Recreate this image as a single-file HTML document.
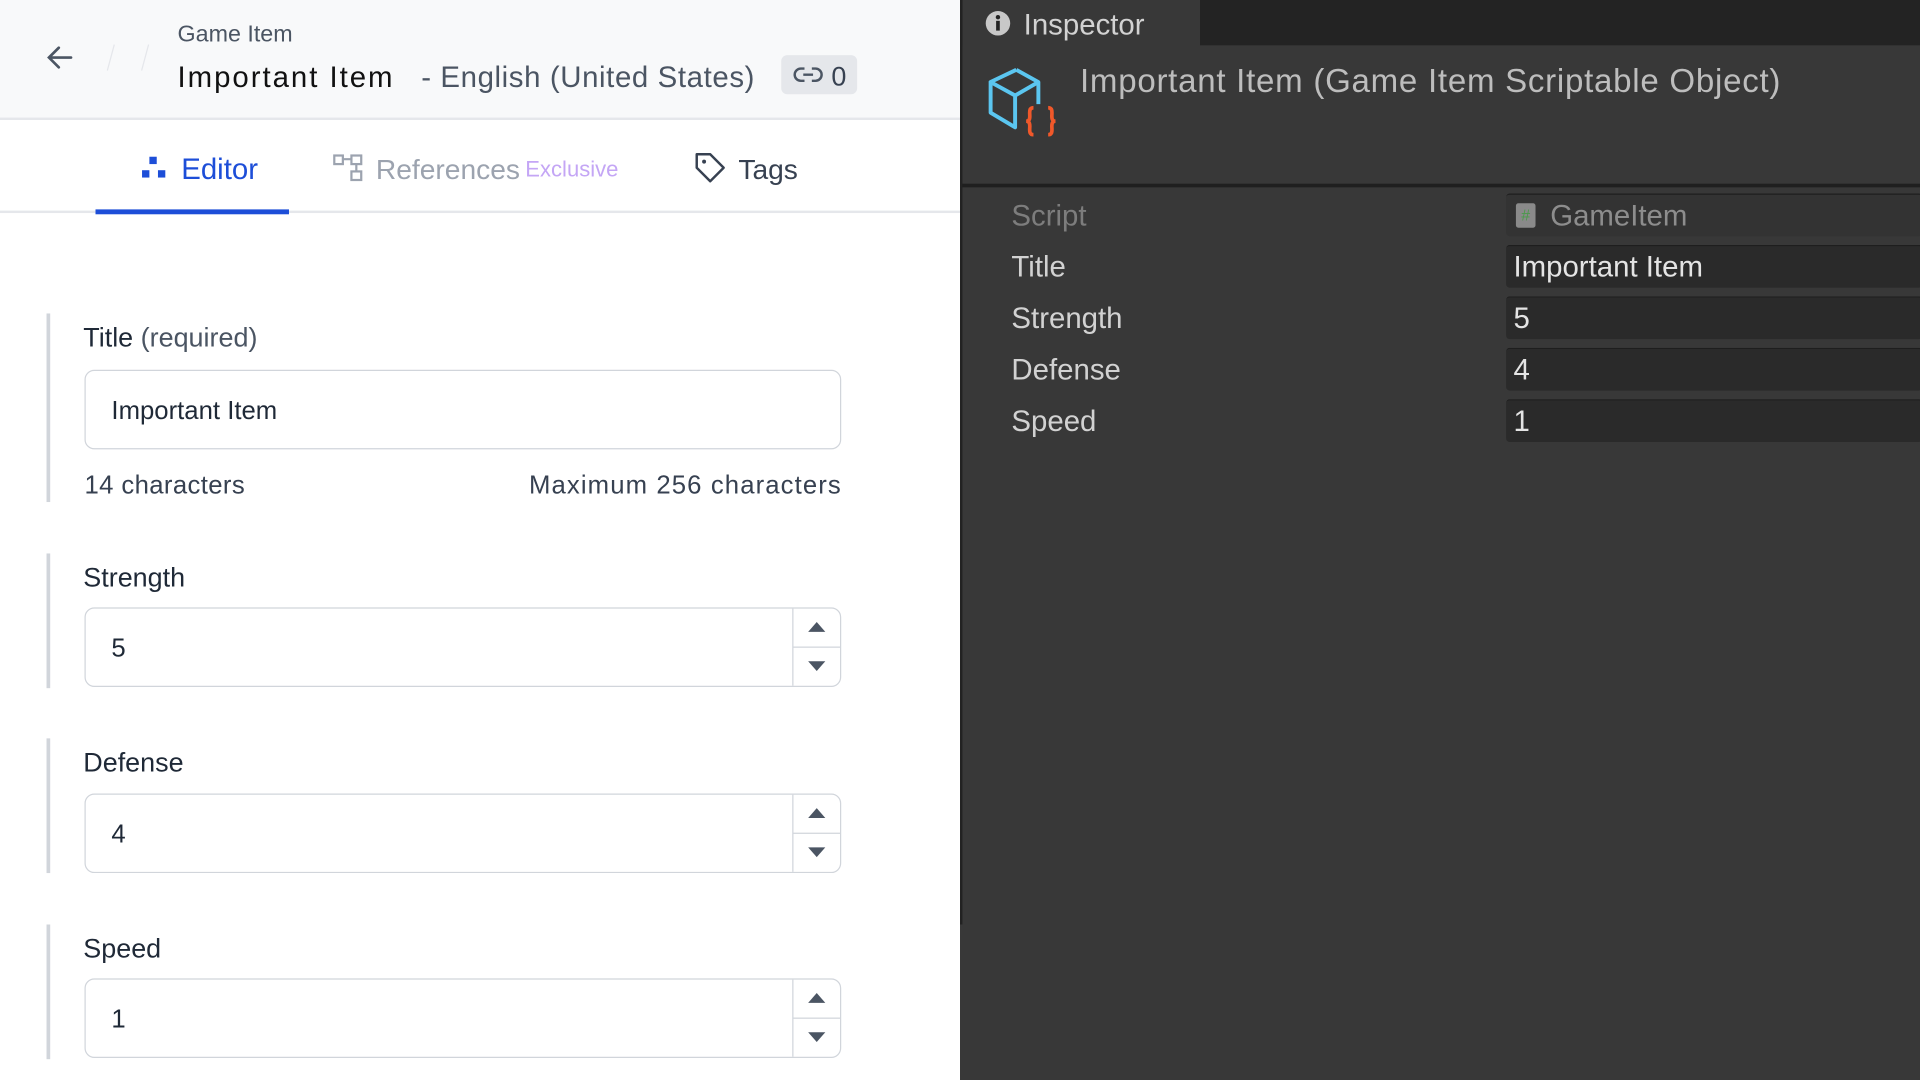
<!DOCTYPE html>
<html><head><meta charset="utf-8"><style>
html,body{margin:0;padding:0;width:1920px;height:1080px;overflow:hidden;background:#fff}
#w{position:absolute;left:0;top:0;width:1568px;height:882px;transform:scale(1.22449);transform-origin:0 0;font-family:"Liberation Sans",sans-serif}
.a{position:absolute}
.lbl{font-size:22px;color:#1f2937}
.inp{position:absolute;left:69px;width:616px;height:63px;border:1px solid #d1d5db;border-radius:8px;background:#fff}
.inp .v{position:absolute;left:21px;top:21px;font-size:21px;color:#1f2937}
.sp{position:absolute;right:0;top:0;width:38px;height:63px;border-left:1px solid #d1d5db}
.sp .m{position:absolute;left:0;right:0;top:31px;border-top:1px solid #d1d5db}
.up,.dn{position:absolute;left:12px;width:0;height:0;border-left:7px solid transparent;border-right:7px solid transparent}
.up{top:11px;border-bottom:8px solid #4b5563}
.dn{top:43px;border-top:8px solid #4b5563}
.bar{position:absolute;left:38px;width:3px;background:#d1d5db}
.dl{position:absolute;left:826px;font-size:24px;color:#d2d2d2}
.df{position:absolute;left:1230px;width:340px;height:34px;background:#2a2a2a;border-radius:3px;border-top:1px solid #1e1e1e}
.df span{position:absolute;left:6px;top:4px;font-size:24px;color:#e4e4e4}
</style></head><body><div id="w">
<!-- left -->
<div class="a" style="left:0;top:0;width:784px;height:96px;background:#f8f9fa;border-bottom:2px solid #e5e7eb"></div>
<svg class="a" style="left:36px;top:34px" width="26" height="26" viewBox="0 0 26 26"><path d="M22 13H4M12 5L4 13l8 8" fill="none" stroke="#4b5563" stroke-width="2.2" stroke-linecap="round"/></svg>
<div class="a" style="left:90px;top:36px;width:1px;height:22px;background:#e5e7eb;transform:rotate(15deg)"></div>
<div class="a" style="left:118px;top:36px;width:1px;height:22px;background:#e5e7eb;transform:rotate(15deg)"></div>
<div class="a" style="left:145px;top:18px;font-size:19px;color:#4b5563">Game Item</div>
<div class="a" style="left:145px;top:50px;font-size:24px;color:#111;letter-spacing:1.6px">Important Item</div>
<div class="a" style="left:344px;top:50px;font-size:24px;color:#4b5563;letter-spacing:.5px">- English (United States)</div>
<div class="a" style="left:638px;top:45px;width:62px;height:32px;background:#e5e7eb;border-radius:5px"></div>
<svg class="a" style="left:647px;top:52px" width="26" height="18" viewBox="0 0 26 18"><path d="M10 4H7a5 5 0 0 0 0 10h3M16 4h3a5 5 0 0 1 0 10h-3M9 9h8" fill="none" stroke="#4b5563" stroke-width="2"/></svg>
<div class="a" style="left:679px;top:50px;font-size:22px;color:#374151">0</div>
<!-- tabs -->
<div class="a" style="left:0;top:172px;width:784px;height:2px;background:#e5e7eb"></div>
<div class="a" style="left:78px;top:171px;width:158px;height:4px;background:#1d4ed8"></div>
<svg class="a" style="left:115px;top:127px" width="22" height="20" viewBox="0 0 22 20"><rect x="7" y="1" width="6" height="6" fill="#1d4ed8"/><rect x="1" y="12" width="6" height="6" fill="#1d4ed8"/><rect x="14" y="12" width="6" height="6" fill="#1d4ed8"/></svg>
<div class="a" style="left:148px;top:125px;font-size:24px;color:#1d4ed8">Editor</div>
<svg class="a" style="left:271px;top:124px" width="28" height="26" viewBox="0 0 28 26"><g fill="none" stroke="#9ca3af" stroke-width="1.8"><rect x="2" y="3" width="7" height="7"/><rect x="16" y="3" width="8" height="7"/><rect x="16" y="16" width="8" height="7"/><path d="M9 6h7M20 10v6"/></g></svg>
<div class="a" style="left:307px;top:125px;font-size:23px;color:#9ca3af">References</div>
<div class="a" style="left:429px;top:128px;font-size:18px;color:#c4a6f5">Exclusive</div>
<svg class="a" style="left:566px;top:123px" width="28" height="28" viewBox="0 0 28 28"><path d="M3 3h11l11 11-11 11L3 14z" fill="none" stroke="#374151" stroke-width="2" stroke-linejoin="round"/><circle cx="9" cy="9" r="1.6" fill="#374151"/></svg>
<div class="a" style="left:603px;top:125px;font-size:23px;color:#374151">Tags</div>
<!-- form -->
<div class="bar" style="top:256px;height:154px"></div>
<div class="a lbl" style="left:68px;top:263px">Title <span style="color:#4b5563">(required)</span></div>
<div class="inp" style="top:302px"><div class="v">Important Item</div></div>
<div class="a" style="left:69px;top:385px;font-size:21px;color:#374151;letter-spacing:.3px">14 characters</div>
<div class="a" style="left:432px;top:385px;font-size:21px;color:#374151;letter-spacing:.9px">Maximum 256 characters</div>
<div class="bar" style="top:452px;height:110px"></div>
<div class="a lbl" style="left:68px;top:459px">Strength</div>
<div class="inp" style="top:496px"><div class="v">5</div><div class="sp"><div class="m"></div><div class="up"></div><div class="dn"></div></div></div>
<div class="bar" style="top:603px;height:110px"></div>
<div class="a lbl" style="left:68px;top:610px">Defense</div>
<div class="inp" style="top:648px"><div class="v">4</div><div class="sp"><div class="m"></div><div class="up"></div><div class="dn"></div></div></div>
<div class="bar" style="top:755px;height:110px"></div>
<div class="a lbl" style="left:68px;top:762px">Speed</div>
<div class="inp" style="top:799px"><div class="v">1</div><div class="sp"><div class="m"></div><div class="up"></div><div class="dn"></div></div></div>
<!-- right -->
<div class="a" style="left:784px;top:0;width:784px;height:882px;background:#383838"></div>
<div class="a" style="left:784px;top:0;width:784px;height:37px;background:#232323"></div>
<div class="a" style="left:786px;top:0;width:194px;height:38px;background:#383838"></div>
<div class="a" style="left:784px;top:0;width:2px;height:755px;background:#222"></div>
<svg class="a" style="left:804px;top:8px" width="22" height="22" viewBox="0 0 22 22"><circle cx="11" cy="11" r="10" fill="#c8c8c8"/><rect x="9.5" y="9" width="3" height="8" fill="#222"/><circle cx="11" cy="6" r="1.8" fill="#222"/></svg>
<div class="a" style="left:836px;top:7px;font-size:24px;color:#d2d2d2">Inspector</div>
<svg class="a" style="left:804px;top:54px" width="64" height="62" viewBox="0 0 64 62"><g fill="none" stroke="#5bc6f0" stroke-width="3.2" stroke-linejoin="round"><path d="M26 3L44 13v18M26 3L5 13l20 11 19-11M5 13v25l20 12V24"/></g><g fill="none" stroke="#f0582a" stroke-width="3"><path d="M40 34c-4 0-3 4-3 7s-1 4-3 4c2 0 3 1 3 4s-1 7 3 7M52 34c4 0 3 4 3 7s1 4 3 4c-2 0-3 1-3 4s1 7-3 7"/></g></svg>
<div class="a" style="left:882px;top:51px;font-size:27px;color:#bdbdbd;letter-spacing:.6px">Important Item (Game Item Scriptable Object)</div>
<div class="a" style="left:786px;top:150px;width:782px;height:3px;background:#1f1f1f"></div>
<div class="dl" style="top:163px;color:#7d7d7d">Script</div>
<div class="df" style="top:158px;background:#333"><span style="left:8px;top:7px;width:16px;height:20px;background:#8a8a8a;border-radius:2px;font-size:13px;color:#4a9a4a;text-align:center;line-height:20px">#</span><span style="left:36px;color:#8d8d8d">GameItem</span></div>
<div class="dl" style="top:205px">Title</div>
<div class="df" style="top:200px"><span>Important Item</span></div>
<div class="dl" style="top:247px">Strength</div>
<div class="df" style="top:242px"><span>5</span></div>
<div class="dl" style="top:289px">Defense</div>
<div class="df" style="top:284px"><span>4</span></div>
<div class="dl" style="top:331px">Speed</div>
<div class="df" style="top:326px"><span>1</span></div>
</div></body></html>
